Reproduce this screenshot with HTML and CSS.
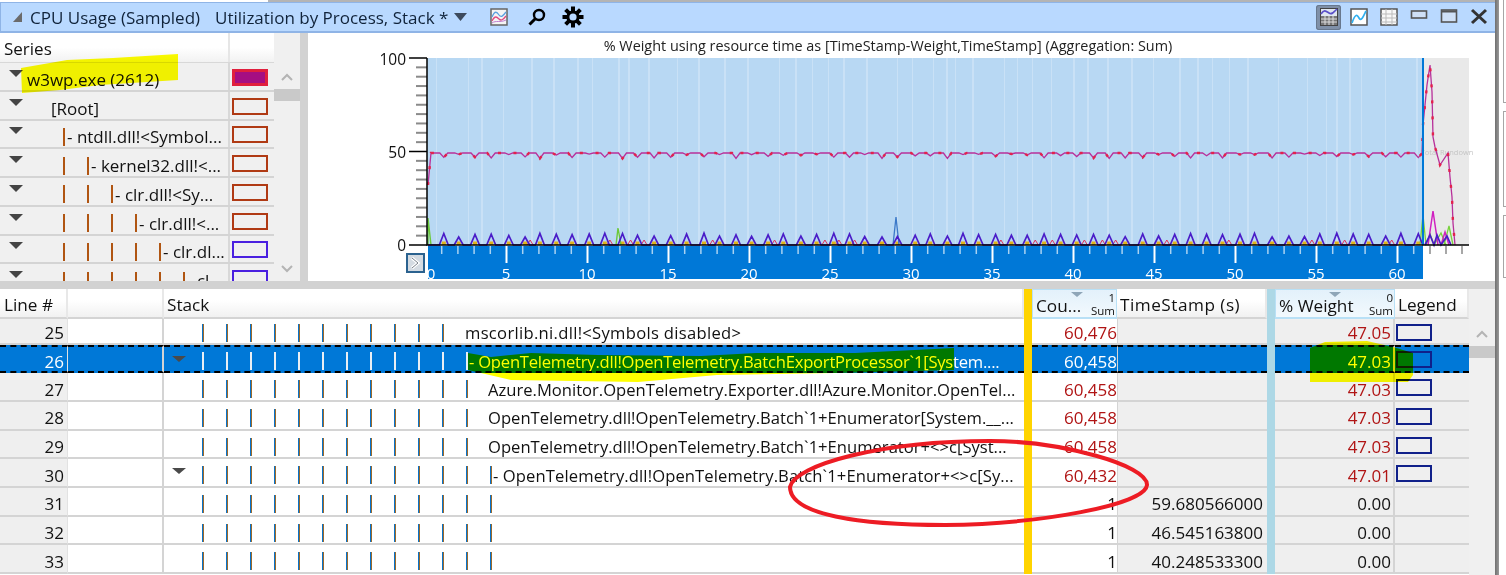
FILE: index.html
```html
<!DOCTYPE html>
<html lang="en">
<head>
<meta charset="utf-8">
<title>CPU Usage (Sampled)</title>
<link rel="stylesheet" href="styles.css">
</head>
<body>
<div class="page">
  <div class="main">
    <div class="strip"><span class="strip-white"></span></div>
    <header class="titlebar">
      <svg class="collapse" width="10" height="10" viewBox="0 0 10 10"><path d="M9 0V10H0Z"/></svg>
      <span class="title-a">CPU Usage (Sampled)</span>
      <span class="title-b">Utilization by Process, Stack *</span>
      <svg class="drop" width="13" height="8" viewBox="0 0 13 8"><path d="M0 0H13L6.5 8Z"/></svg>
      <svg class="ic ic-chart" width="18" height="18" viewBox="0 0 18 18"><rect x="1" y="1" width="16" height="16" fill="#f4f4f4" stroke="#666" stroke-width="1.5"/><path d="M2 9C5 2 7 4 9 7S13 8 16 4" fill="none" stroke="#5aa0e0" stroke-width="1.3"/><path d="M2 13C5 7 7 9 9 11S13 12 16 8" fill="none" stroke="#e04a80" stroke-width="1.3"/><path d="M2 15C6 12 10 15 16 12" fill="none" stroke="#c080d0"/></svg>
      <svg class="ic ic-find" width="18" height="18" viewBox="0 0 18 18"><circle cx="11" cy="7" r="5" fill="none" stroke="#000" stroke-width="2.4"/><path d="M7.5 10.5L1.5 16.5" stroke="#000" stroke-width="3"/></svg>
      <svg class="ic ic-gear" width="22" height="22" viewBox="0 0 22 22"><g stroke="#000" stroke-width="4"><path d="M11 0.5V21.5M0.5 11H21.5M3.6 3.6L18.4 18.4M18.4 3.6L3.6 18.4"/></g><circle cx="11" cy="11" r="6.6" fill="#000"/><circle cx="11" cy="11" r="3.6" fill="#b9d9ff"/></svg>
      <span class="tb-right">
        <span class="tb-btn on"><svg width="18" height="18" viewBox="0 0 18 18"><rect x=".5" y=".5" width="17" height="17" fill="#dfe6f0" stroke="#444"/><path d="M1 6C4 1 6 3 9 5S14 4 17 1" fill="none" stroke="#5a50c8" stroke-width="1.6"/><path d="M1 8H17V17H1Z" fill="#777"/><path d="M1 11H17M1 14H17M5 8V17M9 8V17M13 8V17" stroke="#ddd"/></svg></span>
        <span class="tb-btn"><svg width="18" height="18" viewBox="0 0 18 18"><rect x="1" y="1" width="16" height="16" fill="#fff" stroke="#555" stroke-width="1.5"/><path d="M2 15C5 6 7 6 9 10S13 9 16 3" fill="none" stroke="#30b0f0" stroke-width="1.7"/></svg></span>
        <span class="tb-btn"><svg width="18" height="18" viewBox="0 0 18 18"><rect x="1" y="1" width="16" height="16" fill="#f8f8f8" stroke="#555" stroke-width="1.5"/><path d="M1 6H17M1 10H17M1 14H17M6 1V17M12 1V17" stroke="#bbb"/></svg></span>
        <span class="tb-btn"><svg width="18" height="18" viewBox="0 0 18 18"><rect x="1.5" y="3" width="15" height="7" fill="#cfe0f6" stroke="#555" stroke-width="1.6"/></svg></span>
        <span class="tb-btn"><svg width="18" height="18" viewBox="0 0 18 18"><rect x="1.5" y="2" width="15" height="12" fill="#cfe0f6" stroke="#555" stroke-width="1.6"/><path d="M1 3.5H17" stroke="#555" stroke-width="2"/></svg></span>
        <span class="tb-btn"><svg width="18" height="18" viewBox="0 0 18 18"><path d="M2 2L16 15M16 2L2 15" stroke="#333" stroke-width="3"/></svg></span>
      </span>
    </header>

    <section class="upper">
      <div class="series">
        <div class="series-head"><span class="sh-name">Series</span><span class="sh-leg"></span></div>
        <div class="srow"><span class="sname"><b class="tri"></b><span class="lbl l-first">w3wp.exe (2612)</span></span><span class="sleg"><i class="swatch fill"></i></span></div>
        <div class="srow"><span class="sname"><b class="tri"></b><span class="lbl l-root">[Root]</span></span><span class="sleg"><i class="swatch"></i></span></div>
        <div class="srow"><span class="sname"><b class="tri"></b><span class="sg"><i></i></span><span class="lbl">- ntdll.dll!&lt;Symbol...</span></span><span class="sleg"><i class="swatch"></i></span></div>
        <div class="srow"><span class="sname"><b class="tri"></b><span class="sg"><i></i><i></i></span><span class="lbl">- kernel32.dll!&lt;...</span></span><span class="sleg"><i class="swatch"></i></span></div>
        <div class="srow"><span class="sname"><b class="tri"></b><span class="sg"><i></i><i></i><i></i></span><span class="lbl">- clr.dll!&lt;Sy...</span></span><span class="sleg"><i class="swatch"></i></span></div>
        <div class="srow"><span class="sname"><b class="tri"></b><span class="sg"><i></i><i></i><i></i><i></i></span><span class="lbl">- clr.dll!&lt;...</span></span><span class="sleg"><i class="swatch"></i></span></div>
        <div class="srow"><span class="sname"><b class="tri"></b><span class="sg"><i></i><i></i><i></i><i></i><i></i></span><span class="lbl">- clr.dl...</span></span><span class="sleg"><i class="swatch vio"></i></span></div>
        <div class="srow"><span class="sname"><b class="tri"></b><span class="sg"><i></i><i></i><i></i><i></i><i></i><i></i></span><span class="lbl">- cl...</span></span><span class="sleg"><i class="swatch vio"></i></span></div>
      </div>
      <div class="sscroll">
        <svg class="chev" width="12" height="8" viewBox="0 0 12 8"><path d="M1 7L6 2L11 7" fill="none" stroke="#b4b4b4" stroke-width="2"/></svg>
        <span class="thumb"></span>
        <svg class="chev chev-down" width="12" height="8" viewBox="0 0 12 8"><path d="M1 1L6 6L11 1" fill="none" stroke="#b4b4b4" stroke-width="2"/></svg>
      </div>
      <div class="vsplit"></div>
      <div class="chart">
        <svg id="plot" width="1186" height="248" viewBox="308 33 1186 248">
          <defs><clipPath id="band-clip"><rect x="428" y="256" width="995" height="30"/></clipPath></defs>
          <text class="c-title" x="888" y="51" text-anchor="middle">% Weight using resource time as [TimeStamp-Weight,TimeStamp] (Aggregation: Sum)</text>
          <rect x="427" y="58" width="996" height="187" fill="#b8d8f3"/>
          <rect x="1424" y="58" width="45" height="187" fill="#e9e9e9"/>
          <g id="stripes"></g>
          <rect x="428" y="246" width="995" height="33" fill="#0078d7"/>
          <g id="ticks"></g>
          <text class="c-faint" x="1447" y="155" text-anchor="middle">Total Rundown</text>
          <g id="lines"></g>
          <rect x="1422" y="58" width="2" height="187" fill="#0078d7"/>
          <path d="M427 58V245H1469" fill="none" stroke="#000" stroke-width="1.5"/>
          <g class="c-y" text-anchor="end">
            <text x="406" y="65">100</text>
            <text x="406" y="158">50</text>
            <text x="406" y="251">0</text>
          </g>
          <g class="c-x" text-anchor="middle">
            <text x="431" y="279" clip-path="url(#band-clip)">0</text><text x="506" y="279">5</text><text x="587" y="279">10</text><text x="668" y="279">15</text><text x="749" y="279">20</text><text x="830" y="279">25</text><text x="911" y="279">30</text><text x="992" y="279">35</text><text x="1073" y="279">40</text><text x="1154" y="279">45</text><text x="1235" y="279">50</text><text x="1316" y="279">55</text><text x="1397" y="279">60</text>
          </g>
          <rect x="407" y="254" width="17" height="18" fill="#d4dbe2" stroke="#2b628f" stroke-width="2"/>
          <path d="M412 258L418 263L412 268" fill="none" stroke="#fff" stroke-width="3"/>
          <path d="M412 258L418 263L412 268" fill="none" stroke="#77808a" stroke-width="1"/>
        </svg>
      </div>
    </section>

    <div class="hsplit"></div>

    <section class="lower">
      <div class="grid">
        <div class="row head">
          <span class="c hc">Line #</span>
          <span class="c hc"></span>
          <span class="c hc">Stack</span>
          <span class="bar-y"></span>
          <span class="c hc hsort"><span>Cou...</span><b class="stri"></b><small class="num">1</small><small class="sum">Sum</small></span>
          <span class="c hc h-ts">TimeStamp (s)</span>
          <span class="bar-b"></span>
          <span class="c hc hsort hsort-w"><span>% Weight</span><b class="stri"></b><small class="num">0</small><small class="sum">Sum</small></span>
          <span class="c hc">Legend</span>
        </div>

        <div class="row first">
          <span class="c ln">25</span><span class="c blank"></span>
          <span class="c st"><span class="gd"><i></i><i></i><i></i><i></i><i></i><i></i><i></i><i></i><i></i><i></i><i></i></span><span class="tx tx-a">mscorlib.ni.dll!&lt;Symbols disabled&gt;</span></span>
          <span class="bar-y"></span><span class="c cnt hot">60,476</span><span class="c ts"></span><span class="bar-b"></span><span class="c wt hot">47.05</span><span class="c lg"><i class="sw"></i></span>
        </div>
        <div class="row sel">
          <span class="c ln">26</span><span class="c blank"></span>
          <span class="c st"><b class="tri tri-st"></b><span class="gd gd-t"><i></i><i></i><i></i><i></i><i></i><i></i><i></i><i></i><i></i><i></i><i></i><i></i></span><span class="tx tx-s">- OpenTelemetry.dll!OpenTelemetry.BatchExportProcessor`1[System....</span></span>
          <span class="bar-y"></span><span class="c cnt hot">60,458</span><span class="c ts"></span><span class="bar-b"></span><span class="c wt hot">47.03</span><span class="c lg"><i class="sw"></i></span>
        </div>
        <div class="row">
          <span class="c ln">27</span><span class="c blank"></span>
          <span class="c st"><span class="gd"><i></i><i></i><i></i><i></i><i></i><i></i><i></i><i></i><i></i><i></i><i></i><i></i></span><span class="tx tx-b">Azure.Monitor.OpenTelemetry.Exporter.dll!Azure.Monitor.OpenTel...</span></span>
          <span class="bar-y"></span><span class="c cnt hot">60,458</span><span class="c ts"></span><span class="bar-b"></span><span class="c wt hot">47.03</span><span class="c lg"><i class="sw"></i></span>
        </div>
        <div class="row">
          <span class="c ln">28</span><span class="c blank"></span>
          <span class="c st"><span class="gd"><i></i><i></i><i></i><i></i><i></i><i></i><i></i><i></i><i></i><i></i><i></i><i></i></span><span class="tx tx-b">OpenTelemetry.dll!OpenTelemetry.Batch`1+Enumerator[System.__...</span></span>
          <span class="bar-y"></span><span class="c cnt hot">60,458</span><span class="c ts"></span><span class="bar-b"></span><span class="c wt hot">47.03</span><span class="c lg"><i class="sw"></i></span>
        </div>
        <div class="row">
          <span class="c ln">29</span><span class="c blank"></span>
          <span class="c st"><span class="gd"><i></i><i></i><i></i><i></i><i></i><i></i><i></i><i></i><i></i><i></i><i></i><i></i></span><span class="tx tx-b">OpenTelemetry.dll!OpenTelemetry.Batch`1+Enumerator+&lt;&gt;c[Syst...</span></span>
          <span class="bar-y"></span><span class="c cnt hot">60,458</span><span class="c ts"></span><span class="bar-b"></span><span class="c wt hot">47.03</span><span class="c lg"><i class="sw"></i></span>
        </div>
        <div class="row">
          <span class="c ln">30</span><span class="c blank"></span>
          <span class="c st"><b class="tri tri-st"></b><span class="gd gd-t"><i></i><i></i><i></i><i></i><i></i><i></i><i></i><i></i><i></i><i></i><i></i><i></i><i></i></span><span class="tx tx-d">- OpenTelemetry.dll!OpenTelemetry.Batch`1+Enumerator+&lt;&gt;c[Sy...</span></span>
          <span class="bar-y"></span><span class="c cnt hot">60,432</span><span class="c ts"></span><span class="bar-b"></span><span class="c wt hot">47.01</span><span class="c lg"><i class="sw"></i></span>
        </div>
        <div class="row">
          <span class="c ln">31</span><span class="c blank"></span>
          <span class="c st"><span class="gd"><i></i><i></i><i></i><i></i><i></i><i></i><i></i><i></i><i></i><i></i><i></i><i></i><i></i></span></span>
          <span class="bar-y"></span><span class="c cnt">1</span><span class="c ts">59.680566000</span><span class="bar-b"></span><span class="c wt">0.00</span><span class="c lg"></span>
        </div>
        <div class="row">
          <span class="c ln">32</span><span class="c blank"></span>
          <span class="c st"><span class="gd"><i></i><i></i><i></i><i></i><i></i><i></i><i></i><i></i><i></i><i></i><i></i><i></i><i></i></span></span>
          <span class="bar-y"></span><span class="c cnt">1</span><span class="c ts">46.545163800</span><span class="bar-b"></span><span class="c wt">0.00</span><span class="c lg"></span>
        </div>
        <div class="row">
          <span class="c ln">33</span><span class="c blank"></span>
          <span class="c st"><span class="gd"><i></i><i></i><i></i><i></i><i></i><i></i><i></i><i></i><i></i><i></i><i></i><i></i><i></i></span></span>
          <span class="bar-y"></span><span class="c cnt">1</span><span class="c ts">40.248533300</span><span class="bar-b"></span><span class="c wt">0.00</span><span class="c lg"></span>
        </div>
      </div>
      <div class="tscroll">
        <svg class="chev" width="12" height="8" viewBox="0 0 12 8"><path d="M1 7L6 2L11 7" fill="none" stroke="#b4b4b4" stroke-width="2"/></svg>
        <span class="thumb thumb-t"></span>
      </div>
    </section>
  </div>
  <div class="edge"></div>
  <aside class="side">
    <span class="pane p1"></span>
    <span class="pane p2"></span>
    <span class="pane p3"></span>
  </aside>

  <svg class="marker" width="1506" height="575" viewBox="0 0 1506 575">
    <path fill="#ffff00" d="M21 68L67 60L113 58L178 54V80L100 85L60 90L22 93Z"/>
    <path fill="#ffff00" d="M468 353L491 357L531 353L598 355L701 356L756 353L855 353L954 348V370L835 373L717 375L638 382L511 380L468 370Z"/>
    <path fill="#ffff00" d="M1310 348L1325 342L1367 341L1393 347L1413 353V375L1408 382H1310Z"/>
  </svg>
  <svg class="ring" width="1506" height="575" viewBox="0 0 1506 575">
    <path fill="none" stroke="#ed1c24" stroke-width="4" d="M790 487C795 465 880 441 990 441C1060 441 1148 465 1147 485C1145 505 1040 524 945 525C860 525 790 515 790 487Z"/>
  </svg>
</div>
<script src="chart.js"></script>
</body>
</html>
```
FILE: styles.css
```css
* { box-sizing: border-box; }
html, body { margin: 0; padding: 0; background: #fff; }
body { font-family: "Open Sans", "Liberation Sans", sans-serif; font-size: 17px; color: #111; }
.page { position: relative; width: 1506px; height: 575px; overflow: hidden; display: flex; }
.main { width: 1495px; display: flex; flex-direction: column; }
.edge { width: 4px; background: linear-gradient(90deg, #6f6f6f, #9a9a9a); }
.side { flex: 1; display: flex; flex-direction: column; gap: 8px; padding-left: 4px; }
.pane { display: block; border: 1px solid #a6a6a6; border-right: 0; }
.p1 { height: 104px; margin-top: -1px; }
.p2 { height: 96px; }
.p3 { height: 63px; }

.strip { height: 2px; background: #b4b4b4; flex: none; }
.strip-white { display: block; width: 268px; height: 2px; background: #fff; }

.titlebar { height: 31px; flex: none; display: flex; align-items: center; background: #b9d9ff; border: 1px solid #8fb4e6; border-width: 1px 0 2px 1px; }
.collapse { margin-left: 12px; fill: #6b6b6b; }
.title-a { margin-left: 7px; font-size: 17px; color: #10233a; white-space: nowrap; padding-top: 1px; }
.title-b { margin-left: 15px; font-size: 17px; color: #10233a; white-space: nowrap; padding-top: 1px; }
.drop { margin-left: 6px; fill: #3d4a5c; }
.ic { flex: none; }
.ic-chart { margin-left: 23px; }
.ic-find { margin-left: 20px; }
.ic-gear { margin-left: 16px; }
.tb-right { margin-left: auto; display: flex; align-items: center; gap: 5px; padding-right: 4px; }
.tb-btn { width: 25px; height: 25px; display: flex; align-items: center; justify-content: center; border-radius: 3px; }
.tb-btn.on { background: #7f90a8; box-shadow: inset 0 0 0 1px #68788e; }

.upper { height: 248px; flex: none; display: flex; }
.series { width: 274px; overflow: hidden; flex: none; background: #f0f0f0; }
.series-head { height: 30px; display: grid; grid-template-columns: 230px 44px; background: linear-gradient(#fff 0 50%, #f2f2f2); border-bottom: 1px solid #d8d8d8; }
.sh-name { padding: 4px 0 0 4px; border-right: 2px solid #e6e6e6; }
.srow { height: 28.75px; display: grid; grid-template-columns: 230px 44px; border-bottom: 2px solid #d4d4d4; }
.sname { display: flex; align-items: center; white-space: nowrap; overflow: hidden; border-right: 2px solid #d8d8d8; padding: 6px 0 0 9px; }
.tri { flex: none; width: 0; height: 0; border: solid transparent; border-width: 7px 7px 0; border-top-color: #444; margin-bottom: 12px; }
.sg { display: flex; gap: 22px; margin-left: 40px; }
.sg i { display: block; width: 2px; height: 18px; background: #b05512; }
.lbl { margin-left: 2px; }
.l-first { margin-left: 4px; }
.l-root { margin-left: 28px; }
.sleg { display: flex; align-items: center; padding: 2px 0 0 2px; }
.swatch { display: block; width: 36px; height: 17px; border: 2px solid #b03a14; }
.swatch.fill { background: #a50e82; border: 3px solid #e01f3d; }
.swatch.vio { border-color: #4a20e0; }
.sscroll { width: 26px; flex: none; background: #f0f0f0; display: flex; flex-direction: column; align-items: center; padding-top: 40px; }
.chev { flex: none; }
.thumb { display: block; width: 26px; height: 12px; background: #c9c9c9; margin-top: 8px; }
.chev-down { margin-top: 164px; }
.vsplit { width: 8px; flex: none; background: #d2d2d2; }
.chart { flex: 1; background: #fff; overflow: hidden; }
#plot { display: block; }
.c-title { font-size: 14.4px; fill: #222; }
.c-faint { font-size: 7.5px; fill: #c4c4c4; }
.c-y text { font-size: 15.5px; fill: #111; }
.c-x text { font-size: 15px; fill: #fff; }
.hsplit { height: 8px; flex: none; background: #d2d2d2; }

.lower { flex: 1; display: flex; overflow: hidden; }
.grid { width: 1469px; flex: none; }
.tscroll { flex: 1; background: #f0f0f0; display: flex; flex-direction: column; align-items: center; padding-top: 41px; }
.thumb-t { margin-top: 8px; }
.row { display: grid; grid-template-columns: 68px 96px 860px 8px 85px 150px 8px 120px 74px; height: 28.7px; }
.row.head { height: 30px; }
.row.first { height: 25.6px; }
.c { display: flex; align-items: center; white-space: nowrap; overflow: hidden; border-bottom: 2px solid #d4d4d4; padding-top: 5px; }
.row.first .c { padding-top: 4px; }
.row.head .c { padding-top: 3px; }
.hc { background: linear-gradient(#fff 0 40%, #f1f1f1); border-right: 2px solid #e8e8e8; padding-left: 3px; position: relative; font-size: 17.2px; }
.hc:first-child { padding-left: 4px; }
.h-ts { letter-spacing: .5px; }
.hsort { background: linear-gradient(#e3f1fb, #f2f9fd); border: 1px solid #b8e0f6; border-bottom-width: 2px; padding-left: 3px; }
.stri { position: absolute; left: 38px; top: 2px; width: 0; height: 0; border: solid transparent; border-width: 5px 6px 0; border-top-color: #8fa6b8; }
.hsort-w .stri { left: 53px; }
.num, .sum { position: absolute; right: 1px; font-size: 11.5px; line-height: 12px; }
.num { top: 2px; }
.sum { bottom: 0; }
.bar-y { background: #ffd400; }
.bar-b { background: #add8e6; }
.ln { background: #efefef; justify-content: flex-end; padding-right: 3px; border-right: 1px solid #e2e2e2; }
.blank { background: #fff; border-right: 2px solid #d4d4d4; }
.st { background: #fff; padding-left: 38px; position: relative; font-size: 16.6px; }
.gd { display: flex; gap: 22px; flex: none; }
.gd i { display: block; width: 2px; height: 18px; background: linear-gradient(90deg, #0a72c8 50%, #9a6a2c 50%); }
.tx { flex: none; margin-left: 1px; }
.tx-a { margin-left: 21px; letter-spacing: .3px; }
.tx-b { margin-left: 20px; }
.tx-s { letter-spacing: -.23px; margin-left: 1px; }
.tx-d { letter-spacing: .1px; }
.tri-st { position: absolute; left: 8px; top: 9px; margin: 0; border-width: 6px 7px 0; border-top-color: #4a4a4a; }
.cnt { background: #fff; justify-content: flex-end; }
.ts { background: #efefef; justify-content: flex-end; padding-right: 4px; border-left: 1px solid #d4d4d4; }
.wt { background: #efefef; justify-content: flex-end; padding-right: 2px; border-right: 2px solid #d4d4d4; }
.lg { background: #efefef; padding: 2px 0 0 1px; }
.sw { display: block; width: 36px; height: 17px; border: 2px solid #10208a; }
.hot { color: #b01414; }
.row.sel .c { background: #0078d7; color: #fff; border-top: 2px dashed #000; border-bottom: 2px dashed #000; }
.row.sel .gd i { background: #e9eef4; }

.marker, .ring { position: absolute; left: 0; top: 0; pointer-events: none; }
.marker { mix-blend-mode: multiply; }
```
FILE: chart.js
```js
(function () {
  var NS = 'http://www.w3.org/2000/svg';
  var seed = 7;
  function rnd() { seed = (seed * 16807) % 2147483647; return seed / 2147483647; }
  function add(parent, tag, attrs) {
    var el = document.createElementNS(NS, tag);
    for (var k in attrs) el.setAttribute(k, attrs[k]);
    document.getElementById(parent).appendChild(el);
    return el;
  }
  var x, i;

  for (x = 436; x < 1420; x += 8 + rnd() * 26) {
    add('stripes', 'rect', { x: Math.round(x), y: 58, width: rnd() > 0.6 ? 2 : 1, height: 187, fill: '#fff', opacity: 0.24 });
  }

  for (i = 0; i <= 20; i++) {
    var yy = 58 + i * 9.35;
    var major = i % 10 === 0;
    add('ticks', 'line', { x1: major ? 409 : 416, x2: 427, y1: yy, y2: yy, stroke: major ? '#000' : '#8a8a8a', 'stroke-width': major ? 1.5 : 2 });
  }
  for (i = 0; i <= 61; i++) {
    x = 425.5 + i * 16.2;
    if (x < 430) continue;
    var big = i % 5 === 0;
    add('ticks', 'line', { x1: x, x2: x, y1: 246, y2: big ? 263 : 254, stroke: big ? '#fff' : '#a9d2f2', 'stroke-width': big ? 2 : 1.5 });
  }
  [1430, 1446, 1462].forEach(function (tx) {
    add('ticks', 'line', { x1: tx, x2: tx, y1: 246, y2: 254, stroke: '#8a8a8a', 'stroke-width': 1.5 });
  });

  var pts = [[428, 185], [431, 153]];
  var base = 'M428 245';
  var gold = '';
  var extra = [];
  for (x = 443; x < 1420; x += 16.25) {
    var h = 8 + rnd() * 4;
    var cx = x + (rnd() - 0.5) * 2;
    base += 'L' + (cx - 4.5).toFixed(1) + ' 245L' + cx.toFixed(1) + ' ' + (245 - h).toFixed(1) + 'L' + (cx + 4.5).toFixed(1) + ' 245';
    gold += 'M' + (cx - 2).toFixed(1) + ' 245V241.5H' + (cx + 2).toFixed(1) + 'V245Z';
    pts.push([cx - 4, 153]);
    pts.push([cx, 154 + rnd() * 4.5]);
    pts.push([cx + 4, 153]);
    if (rnd() > 0.72) extra.push(cx + 5 + rnd() * 4);
  }
  pts = pts.concat([[1422, 153], [1423, 125], [1427, 85], [1430, 65], [1432, 92], [1433, 137], [1435, 147], [1440, 165], [1448, 153], [1450, 177], [1452, 197], [1453, 223], [1455, 245]]);
  var line = pts.map(function (p) { return p[0].toFixed(1) + ',' + p[1].toFixed(1); }).join(' ');

  add('lines', 'path', { d: gold, fill: '#e3b21c' });
  add('lines', 'path', { d: 'M1420 245L1423 215L1426 245L1430 234L1434 245L1441 233L1446 245M1444 245L1449 226L1453 245', fill: 'none', stroke: '#78d23c', 'stroke-width': 1.3 });
  add('lines', 'path', { d: 'M428 245V218L431 245M616 245L618 228L621 245', fill: 'none', stroke: '#6cc83a', 'stroke-width': 1.4 });
  add('lines', 'path', { d: 'M1428 245L1433 211L1438 245M1441 245L1445 232L1449 245', fill: 'none', stroke: '#d020c0', 'stroke-width': 1.5 });
  add('lines', 'path', { d: 'M893 245L896 217L899 245', fill: 'none', stroke: '#3a78c8', 'stroke-width': 1.3 });
  extra.forEach(function (ex) {
    add('lines', 'path', { d: 'M' + (ex - 3) + ' 245L' + ex + ' 240L' + (ex + 3) + ' 245', fill: 'none', stroke: '#e0305a', 'stroke-width': 1 });
  });
  add('lines', 'path', { d: base + 'L1423 245M1425 245L1430 235L1434 245L1437 235L1441 245L1447 236L1451 245', fill: 'none', stroke: '#4a1cc8', 'stroke-width': 1.7 });
  add('lines', 'polyline', { points: line, fill: 'none', stroke: '#b8309a', 'stroke-width': 1.3 });
  add('lines', 'polyline', { points: line, fill: 'none', stroke: '#e3224c', 'stroke-width': 2.4, 'stroke-dasharray': '3 13' });
})();
```
